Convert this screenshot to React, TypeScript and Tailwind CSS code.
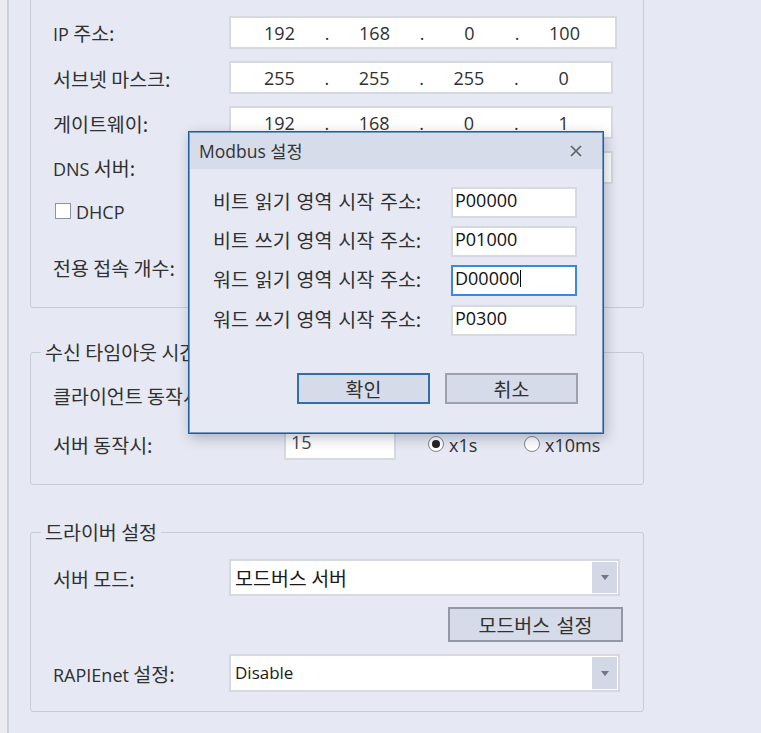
import React from "react";

const NUM = "font-['Open_Sans','Noto_Sans_CJK_KR',sans-serif] text-[18px]";

function L({ children, size }: { children: React.ReactNode; size?: string }) {
  return <span className={`font-['Open_Sans',sans-serif] ${size ?? "text-[18px]"}`}>{children}</span>;
}

function IpField({ vals, w }: { vals: string[]; w: string }) {
  return (
    <div className={`${w} h-[33px] bg-white border-2 border-[#d6d9e0] flex items-center pl-[1px] ${NUM}`}>
      {vals.map((v, i) => (
        <React.Fragment key={i}>
          <div className="w-[95px] text-center leading-[24px]">{v}</div>
          {i < 3 && <div className="w-0 flex justify-center leading-[24px]">.</div>}
        </React.Fragment>
      ))}
    </div>
  );
}

function Row({ label, lw, h, mt, children }: { label: React.ReactNode; lw: string; h: string; mt: string; children?: React.ReactNode }) {
  return (
    <div className={`flex items-center ${h} ${mt}`}>
      <div className={`${lw} shrink-0 leading-[24px] pt-[2px]`}>{label}</div>
      {children}
    </div>
  );
}

function Radio({ on, label, w }: { on: boolean; label: string; w: string }) {
  return (
    <div className={`flex items-center ${w}`}>
      <div className="w-[16px] h-[16px] rounded-full bg-white border border-[#80858f] flex items-center justify-center">
        {on && <div className="w-[8px] h-[8px] rounded-full bg-[#222]" />}
      </div>
      <span className="ml-[5px] leading-[24px] pt-[1px]">
        <L>{label}</L>
      </span>
    </div>
  );
}

function Combo({ text, h }: { text: React.ReactNode; h: string }) {
  return (
    <div className={`w-[391px] ${h} bg-white border-2 border-[#d6d9e0] flex items-stretch`}>
      <div className="flex-1 flex items-center pl-[4px] leading-[24px] text-[#1a1a1a]">{text}</div>
      <div className="w-[25px] my-[1px] mr-[1px] bg-[#d2d8e6] flex items-center justify-center">
        <svg width="8" height="5" viewBox="0 0 8 5">
          <path d="M0 0 L8 0 L4 5 Z" fill="#70757f" />
        </svg>
      </div>
    </div>
  );
}

function GroupTitle({ t }: { t: string }) {
  return <div className="-mt-[13px] ml-[10px] px-[4px] w-fit bg-[#e6e9f3] leading-[24px]">{t}</div>;
}

function EmptyBox({ w, h }: { w: string; h: string }) {
  return <div className={`${w} ${h} bg-white border-2 border-[#d6d9e0]`} />;
}

function DlgInput({ v, focus }: { v: string; focus?: boolean }) {
  return (
    <div
      className={`w-[126px] h-[31px] bg-white border-2 ${focus ? "border-[#3b8ad9]" : "border-[#d6d9e0]"} flex items-start pl-[2px] text-[#111] ${NUM}`}
    >
      <span className="leading-[22px]">{v}</span>
      {focus && <span className="mt-[3px] w-[1px] h-[17px] bg-black" />}
    </div>
  );
}

function DlgRow({ label, v, focus, mt }: { label: string; v: string; focus?: boolean; mt: string }) {
  return (
    <div className={`flex items-center h-[31px] ${mt}`}>
      <div className="w-[238px] shrink-0 leading-[24px] pb-[4px] [word-spacing:1.5px]">{label}</div>
      <DlgInput v={v} focus={focus} />
    </div>
  );
}

export default function App() {
  return (
    <div className="relative w-[761px] h-[733px] overflow-hidden bg-[#e6e9f3] text-[19.5px] text-[#303030] font-['Noto_Sans_CJK_KR','Open_Sans',sans-serif] flex">
      <div className="w-[7px] h-full bg-[#eaecf2] shrink-0" />
      <div className="w-[2px] h-full bg-[#cdd0d8] shrink-0" />
      <div className="ml-[21px] flex flex-col">
        {/* Top group */}
        <div className="mt-[-10px] w-[614px] border border-[#c8ccd5] rounded-[3px] pt-[25px] pb-[23px] pl-[22px]">
          <Row label={<><L>IP</L> 주소:</>} lw="w-[176px]" h="h-[33px]" mt="mt-0">
            <IpField vals={["192", "168", "0", "100"]} w="w-[388px]" />
          </Row>
          <Row label="서브넷 마스크:" lw="w-[176px]" h="h-[33px]" mt="mt-[12px]">
            <IpField vals={["255", "255", "255", "0"]} w="w-[384px]" />
          </Row>
          <Row label="게이트웨이:" lw="w-[176px]" h="h-[33px]" mt="mt-[12px]">
            <IpField vals={["192", "168", "0", "1"]} w="w-[384px]" />
          </Row>
          <Row label={<><L>DNS</L> 서버:</>} lw="w-[176px]" h="h-[33px]" mt="mt-[12px]">
            <EmptyBox w="w-[384px]" h="h-[33px]" />
          </Row>
          <div className="flex items-center h-[30px] mt-[12px]">
            <div className="ml-[2px] w-[16px] h-[16px] bg-white border border-[#8d939e]" />
            <span className="ml-[5px] leading-[24px]">
              <L>DHCP</L>
            </span>
          </div>
          <Row label="전용 접속 개수:" lw="w-[176px]" h="h-[34px]" mt="mt-[24px]">
            <EmptyBox w="w-[112px]" h="h-[33px]" />
          </Row>
        </div>

        {/* Receive timeout group */}
        <div className="mt-[44px] w-[614px] border border-[#c8ccd5] rounded-[3px]">
          <GroupTitle t="수신 타임아웃 시간 설정" />
          <div className="pl-[22px] pb-[24px]">
            <Row label="클라이언트 동작시:" lw="w-[231px]" h="h-[32px]" mt="mt-[15px]">
              <EmptyBox w="w-[112px]" h="h-[32px]" />
            </Row>
            <Row label="서버 동작시:" lw="w-[231px]" h="h-[32px]" mt="mt-[17px]">
              <div className={`w-[112px] h-[32px] bg-white border-2 border-[#d6d9e0] pl-[5px] leading-[24px] text-[#444] ${NUM}`}>15</div>
              <div className="ml-[32px] flex">
                <Radio on label="x1s" w="w-[96px]" />
                <Radio on={false} label="x10ms" w="w-[96px]" />
              </div>
            </Row>
          </div>
        </div>

        {/* Driver group */}
        <div className="mt-[47px] w-[614px] border border-[#c8ccd5] rounded-[3px]">
          <GroupTitle t="드라이버 설정" />
          <div className="pl-[22px] pb-[19px]">
            <Row label="서버 모드:" lw="w-[176px]" h="h-[37px]" mt="mt-[15px]">
              <Combo text="모드버스 서버" h="h-[37px]" />
            </Row>
            <div className="mt-[11px] ml-[395px] w-[175px] h-[35px] bg-[#d5dbe8] border-2 border-[#9299a6] flex items-center justify-center leading-[24px] [word-spacing:2px]">
              모드버스 설정
            </div>
            <Row label={<><L>RAPIEnet</L> 설정:</>} lw="w-[176px]" h="h-[38px]" mt="mt-[12px]">
              <Combo text={<L size="text-[17px]">Disable</L>} h="h-[38px]" />
            </Row>
          </div>
        </div>
      </div>

      {/* Modbus dialog */}
      <div className="absolute left-[188px] top-[131px] w-[416px] h-[303px] border border-[#1d5f9f] bg-[#e6e9f3] shadow-[inset_0_0_0_1px_#6f98c4,2px_4px_12px_rgba(40,50,80,0.3)] flex flex-col p-[1px]">
        <div className="h-[36px] bg-[#d6dcea] flex items-center justify-between pl-[9px] pr-[20px]">
          <span className="text-[17.5px] leading-[24px] text-[#333] font-['Open_Sans','Noto_Sans_CJK_KR',sans-serif]">Modbus 설정</span>
          <svg width="12" height="12" viewBox="0 0 12 12">
            <path d="M1 1 L11 11 M11 1 L1 11" stroke="#5f6369" strokeWidth="1.7" />
          </svg>
        </div>
        <div className="pl-[23px]">
          <DlgRow label="비트 읽기 영역 시작 주소:" v="P00000" mt="mt-[18px]" />
          <DlgRow label="비트 쓰기 영역 시작 주소:" v="P01000" mt="mt-[8px]" />
          <DlgRow label="워드 읽기 영역 시작 주소:" v="D00000" focus mt="mt-[8px]" />
          <DlgRow label="워드 쓰기 영역 시작 주소:" v="P0300" mt="mt-[9px]" />
        </div>
        <div className="mt-[37px] pr-[24px] flex justify-end gap-[15px]">
          <div className="w-[133px] h-[31px] bg-[#d5dbe8] border-2 border-[#2f6fb0] flex items-center justify-center leading-[24px]">확인</div>
          <div className="w-[133px] h-[31px] bg-[#d5dbe8] border-2 border-[#9ca2ad] flex items-center justify-center leading-[24px]">취소</div>
        </div>
      </div>
    </div>
  );
}
